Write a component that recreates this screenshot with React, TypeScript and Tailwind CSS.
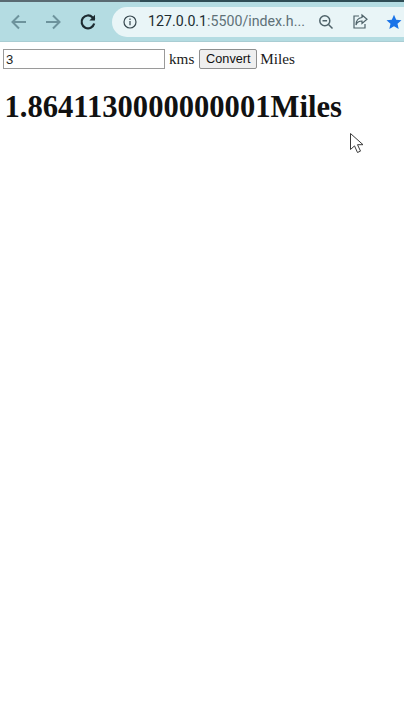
import React from "react";

export default function App() {
  return (
    <div className="relative w-[404px] h-[720px] overflow-hidden bg-white font-['Liberation_Serif',serif]">
      <div className="h-[2px] flex">
        <div className="w-[140px] bg-[#5a6a72]" />
        <div className="flex-1 bg-[#2f4d55]" />
      </div>
      <div className="h-[40px] bg-[#b4dce2] flex items-center border-b border-[#a9cdd3]">
        <div className="w-[112px] shrink-0 flex items-center">
          <svg className="ml-[10px]" width="18" height="18" viewBox="0 0 18 18" fill="none" stroke="#6d939c" strokeWidth="2"><path d="M16 9H2.5M9 2.5 2.5 9 9 15.5" /></svg>
          <svg className="ml-[16px]" width="18" height="18" viewBox="0 0 18 18" fill="none" stroke="#6d939c" strokeWidth="2"><path d="M2 9h13.5M9 2.5 15.5 9 9 15.5" /></svg>
          <svg className="ml-[17px]" width="18" height="18" viewBox="0 0 18 18" fill="none" stroke="#1c2a30" strokeWidth="2.2"><path d="M15.2 10.5A6.4 6.4 0 1 1 13.6 4.4L15.5 6.5" /><path d="M16 1.8v5.6h-5.6" fill="#1c2a30" stroke="none" /></svg>
        </div>
        <div className="flex-1 h-[30px] bg-[#e9f5f7] rounded-l-[15px] flex items-center min-w-0">
          <svg className="ml-[11px] shrink-0" width="14" height="14" viewBox="0 0 14 14" fill="none" stroke="#36474e" strokeWidth="1.2"><circle cx="7" cy="7" r="6" /><path d="M7 6v4.2M7 3.6v1.3" /></svg>
          <span className="ml-[11px] w-[158px] shrink-0 whitespace-nowrap text-[14.2px] text-[#5f7178] font-['Roboto',sans-serif]"><span className="text-[#202c31]">127.0.0.1</span>:5500/index.h...</span>
          <svg className="ml-[12px] shrink-0" width="16" height="16" viewBox="0 0 16 16" fill="none" stroke="#4e6269" strokeWidth="1.5"><circle cx="6.8" cy="6.8" r="5" /><path d="M10.5 10.5 14.5 14.5M4.5 6.8h4.6" /></svg>
          <svg className="ml-[18px] shrink-0" width="17" height="17" viewBox="0 0 17 17" fill="none" stroke="#4e6269" strokeWidth="1.2"><path d="M7 3H2v12h11v-4" /><path d="M10 2l5 4.3-5 4.2V8c-3 0-5 1-6 4 0-4 2-7 6-7.5z" /></svg>
          <svg className="ml-[17px] shrink-0" width="16" height="16" viewBox="0 0 16 16" fill="#1a73e8"><path d="M8 .8l2.2 4.9 5.3.5-4 3.5 1.2 5.2L8 12.2l-4.7 2.7 1.2-5.2-4-3.5 5.3-.5z" /></svg>
        </div>
      </div>
      <div className="h-[7px]" />
      <div className="flex items-center h-[20px] pl-[3px] text-[15.2px] text-[#1a1a1a]">
        <input readOnly value="3" className="w-[162px] h-[20px] border border-[#9a9a9a] bg-white px-[2px] text-[13px] text-[#222] outline-none font-['Liberation_Sans',sans-serif]" />
        <span className="ml-[4px]">kms</span>
        <button className="ml-[5px] w-[58px] h-[20px] bg-[#efefef] border border-[#8f8f8f] rounded-[2px] text-[12.7px] text-[#111] font-['Liberation_Sans',sans-serif]">Convert</button>
        <span className="ml-[3px]">Miles</span>
      </div>
      <h1 className="mt-[20px] ml-[4.5px] text-[30.6px] leading-[36px] font-bold text-[#111] whitespace-nowrap">1.8641130000000001Miles</h1>
      <svg className="absolute left-[349px] top-[132px]" width="15" height="23" viewBox="0 0 15 23" fill="#fff" stroke="#3a3a3a" strokeWidth="1"><path d="M1.5 1.5v16l4-3.6 3 6.6 3-1.4-3-6.4h5.5z" /></svg>
    </div>
  );
}
